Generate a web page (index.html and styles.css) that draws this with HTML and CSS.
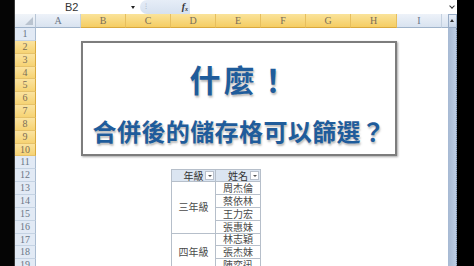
FILE: index.html
```html
<!DOCTYPE html>
<html lang="zh-Hant">
<head>
<meta charset="utf-8">
<title>合併儲存格篩選</title>
<link rel="stylesheet" href="styles.css">
</head>
<body>
<div class="screen">
  <div class="edge-left"></div>
  <div class="app">
    <div class="topbar">
      <div class="namebox">B2</div>
      <div class="nb-arrow"></div>
      <div class="fx-pill"><span class="grip">⁝</span><span class="fx">f<sub>x</sub></span></div>
      <div class="formula"></div>
    </div>
    <div class="sheet">
      <div class="corner"><span class="tri"></span></div>
      <div class="ch">A</div>
      <div class="ch sel">B</div>
      <div class="ch sel">C</div>
      <div class="ch sel">D</div>
      <div class="ch sel">E</div>
      <div class="ch sel">F</div>
      <div class="ch sel">G</div>
      <div class="ch sel">H</div>
      <div class="ch">I</div>
      <div class="ch blank"></div>

      <div class="rh r1">1</div>
      <div class="rh sel r2">2</div>
      <div class="rh sel r3">3</div>
      <div class="rh sel r4">4</div>
      <div class="rh sel r5">5</div>
      <div class="rh sel r6">6</div>
      <div class="rh sel r7">7</div>
      <div class="rh sel r8">8</div>
      <div class="rh sel r9">9</div>
      <div class="rh sel r10">10</div>
      <div class="rh r11">11</div>
      <div class="rh r12">12</div>
      <div class="rh r13">13</div>
      <div class="rh r14">14</div>
      <div class="rh r15">15</div>
      <div class="rh r16">16</div>
      <div class="rh r17">17</div>
      <div class="rh r18">18</div>
      <div class="rh r19">19</div>

      <div class="textbox">
        <div class="tb-title">什麼！</div>
        <div class="tb-sub">合併後的儲存格可以篩選？</div>
      </div>

      <div class="tc th grade-h">年級<span class="filter"></span></div>
      <div class="tc th name-h">姓名<span class="filter"></span></div>

      <div class="tc grade g3">三年級</div>
      <div class="tc name n13">周杰倫</div>
      <div class="tc name n14">蔡依林</div>
      <div class="tc name n15">王力宏</div>
      <div class="tc name n16">張惠妹</div>

      <div class="tc grade g4">四年級</div>
      <div class="tc name n17">林志穎</div>
      <div class="tc name n18">張杰妹</div>
      <div class="tc name n19">陳奕迅</div>
    </div>
  </div>
  <div class="vscroll">
    <div class="vs-top"><span class="chev"></span></div>
    <div class="vs-btn"><span class="up"></span></div>
    <div class="vs-track"></div>
  </div>
  <div class="edge-right"></div>
</div>
</body>
</html>
```

FILE: styles.css
```css
* { box-sizing: border-box; }
html, body { margin: 0; padding: 0; }
body {
  width: 474px;
  height: 266px;
  overflow: hidden;
  background: #000;
  font-family: "Liberation Sans", "Noto Sans CJK TC", sans-serif;
}
.screen {
  display: flex;
  width: 474px;
  height: 266px;
  overflow: hidden;
}
.edge-left {
  width: 15px;
  flex: none;
  background: #050505;
  border-right: 1px solid #3a3a3a;
}
.app {
  width: 433px;
  flex: none;
  display: flex;
  flex-direction: column;
  background: #fff;
  overflow: hidden;
}
.topbar {
  height: 14px;
  flex: none;
  display: flex;
  align-items: stretch;
  background: #fff;
}
.namebox {
  width: 111px;
  padding-left: 50px;
  font-size: 11px;
  line-height: 14px;
  color: #333;
}
.nb-arrow {
  width: 14px;
  position: relative;
}
.nb-arrow::after {
  content: "";
  position: absolute;
  left: 5px;
  top: 6px;
  border-left: 2.5px solid transparent;
  border-right: 2.5px solid transparent;
  border-top: 3px solid #222;
}
.fx-pill {
  width: 50px;
  background: linear-gradient(#e6edf7, #d6e1ef);
  border-radius: 7px 0 0 7px;
  display: flex;
  align-items: center;
  justify-content: space-between;
  padding: 0 2px 0 5px;
}
.grip {
  font-size: 8px;
  color: #aab6c6;
  line-height: 1;
}
.fx {
  font-family: "Liberation Serif", serif;
  font-style: italic;
  font-weight: bold;
  font-size: 10px;
  color: #333;
  line-height: 1;
}
.fx sub { font-size: 6px; vertical-align: -1px; }
.formula { flex: 1; background: #fff; }

.sheet {
  display: grid;
  grid-template-columns: 21px repeat(7, 45px) 46px 45px 1fr;
  grid-template-rows: 14px repeat(19, 12.85px);
  flex: none;
  background: #fff;
}
.corner {
  background: linear-gradient(#f0f4f9, #dfe7f1);
  border-right: 1px solid #b8c6d6;
  border-bottom: 1px solid #9fb3ca;
  position: relative;
}
.tri {
  position: absolute;
  right: 2px;
  bottom: 2px;
  width: 0;
  height: 0;
  border-left: 8px solid transparent;
  border-bottom: 8px solid #b9c3cf;
}
.ch {
  background: linear-gradient(#edf2f9, #d9e3f0);
  border-right: 1px solid #c4d1e0;
  border-bottom: 1px solid #9fb3ca;
  font-family: "Liberation Serif", serif;
  font-size: 10px;
  line-height: 13px;
  color: #6a7686;
  text-align: center;
}
.ch.sel {
  background: linear-gradient(#fae39a, #f5cd63);
  border-right: 1px solid #e7bf5e;
  border-bottom: 1px solid #d9a93e;
  color: #7b6e57;
}
.ch.blank { border-right: none; }
.rh {
  grid-column: 1;
  background: #e2eaf5;
  border-right: 1px solid #a9bbd0;
  border-bottom: 1px solid #c5d3e3;
  font-family: "Liberation Serif", serif;
  font-size: 10px;
  line-height: 12px;
  color: #6a7686;
  text-align: center;
}
.rh.sel {
  background: linear-gradient(#fbe39f, #f6d374);
  border-bottom: 1px solid #e6c26a;
  border-right: 1px solid #d9a93e;
  color: #7b6e57;
}
.r1 { grid-row: 2; } .r2 { grid-row: 3; } .r3 { grid-row: 4; } .r4 { grid-row: 5; }
.r5 { grid-row: 6; } .r6 { grid-row: 7; } .r7 { grid-row: 8; } .r8 { grid-row: 9; }
.r9 { grid-row: 10; } .r10 { grid-row: 11; } .r11 { grid-row: 12; } .r12 { grid-row: 13; }
.r13 { grid-row: 14; } .r14 { grid-row: 15; } .r15 { grid-row: 16; } .r16 { grid-row: 17; }
.r17 { grid-row: 18; } .r18 { grid-row: 19; } .r19 { grid-row: 20; }

.textbox {
  grid-column: 3 / 10;
  grid-row: 3 / 12;
  border: 2px solid #7d7d7d;
  background: #fff;
  box-shadow: 1px 1px 2px rgba(0,0,0,0.35);
  display: flex;
  flex-direction: column;
  align-items: center;
  font-family: "Noto Sans CJK TC", "Noto Sans CJK SC", sans-serif;
  font-weight: bold;
  color: #1f5c9b;
  text-shadow: 1px 2px 2px rgba(60,60,60,0.35);
}
.tb-title {
  margin-top: 18px;
  font-size: 31px;
  line-height: 36px;
  letter-spacing: 3px;
  padding-left: 3px;
}
.tb-sub {
  margin-top: 20px;
  font-size: 24px;
  line-height: 28px;
  letter-spacing: 0.4px;
}

.tc {
  font-family: "Noto Sans CJK TC", "Noto Sans CJK SC", sans-serif;
  font-size: 10px;
  color: #4a4a4a;
  display: flex;
  align-items: center;
  justify-content: center;
  border-right: 1px solid #b6bfca;
  border-bottom: 1px solid #b6bfca;
  background: #fff;
  line-height: 1;
}
.th {
  grid-row: 13;
  background: #dbe5f1;
  border-top: 1px solid #b6bfca;
  color: #333;
  position: relative;
}
.grade-h { grid-column: 5; border-left: 1px solid #b6bfca; }
.name-h { grid-column: 6; }
.filter {
  position: absolute;
  right: 1px;
  top: 1px;
  width: 9px;
  height: 9px;
  background: #fff;
  border: 1px solid #b9c1cc;
}
.filter::after {
  content: "";
  position: absolute;
  left: 2px;
  top: 3px;
  border-left: 2px solid transparent;
  border-right: 2px solid transparent;
  border-top: 2px solid #555;
}
.grade { grid-column: 5; border-left: 1px solid #b6bfca; }
.g3 { grid-row: 14 / 18; }
.g4 { grid-row: 18 / 21; }
.name { grid-column: 6; }
.n13 { grid-row: 14; } .n14 { grid-row: 15; } .n15 { grid-row: 16; } .n16 { grid-row: 17; }
.n17 { grid-row: 18; } .n18 { grid-row: 19; } .n19 { grid-row: 20; }

.vscroll {
  width: 9px;
  flex: none;
  display: flex;
  flex-direction: column;
  background: #b2c4dc;
}
.vs-top {
  height: 14px;
  background: #fff;
  position: relative;
}
.chev {
  position: absolute;
  left: 2px;
  top: 4px;
  width: 4px;
  height: 4px;
  border-right: 1px solid #333;
  border-bottom: 1px solid #333;
  transform: rotate(45deg);
}
.vs-btn {
  height: 14px;
  background: linear-gradient(#e8eef7, #c9d7ea);
  border: 1px solid #98acc6;
  position: relative;
}
.up {
  position: absolute;
  left: 1px;
  top: 4px;
  border-left: 2.5px solid transparent;
  border-right: 2.5px solid transparent;
  border-bottom: 3px solid #333;
}
.vs-track {
  flex: 1;
  background: linear-gradient(90deg, #a6b9d3, #bccde3);
  border-right: 1px dotted #6d7f96;
}
.edge-right {
  flex: 1;
  background: #000;
}
```
